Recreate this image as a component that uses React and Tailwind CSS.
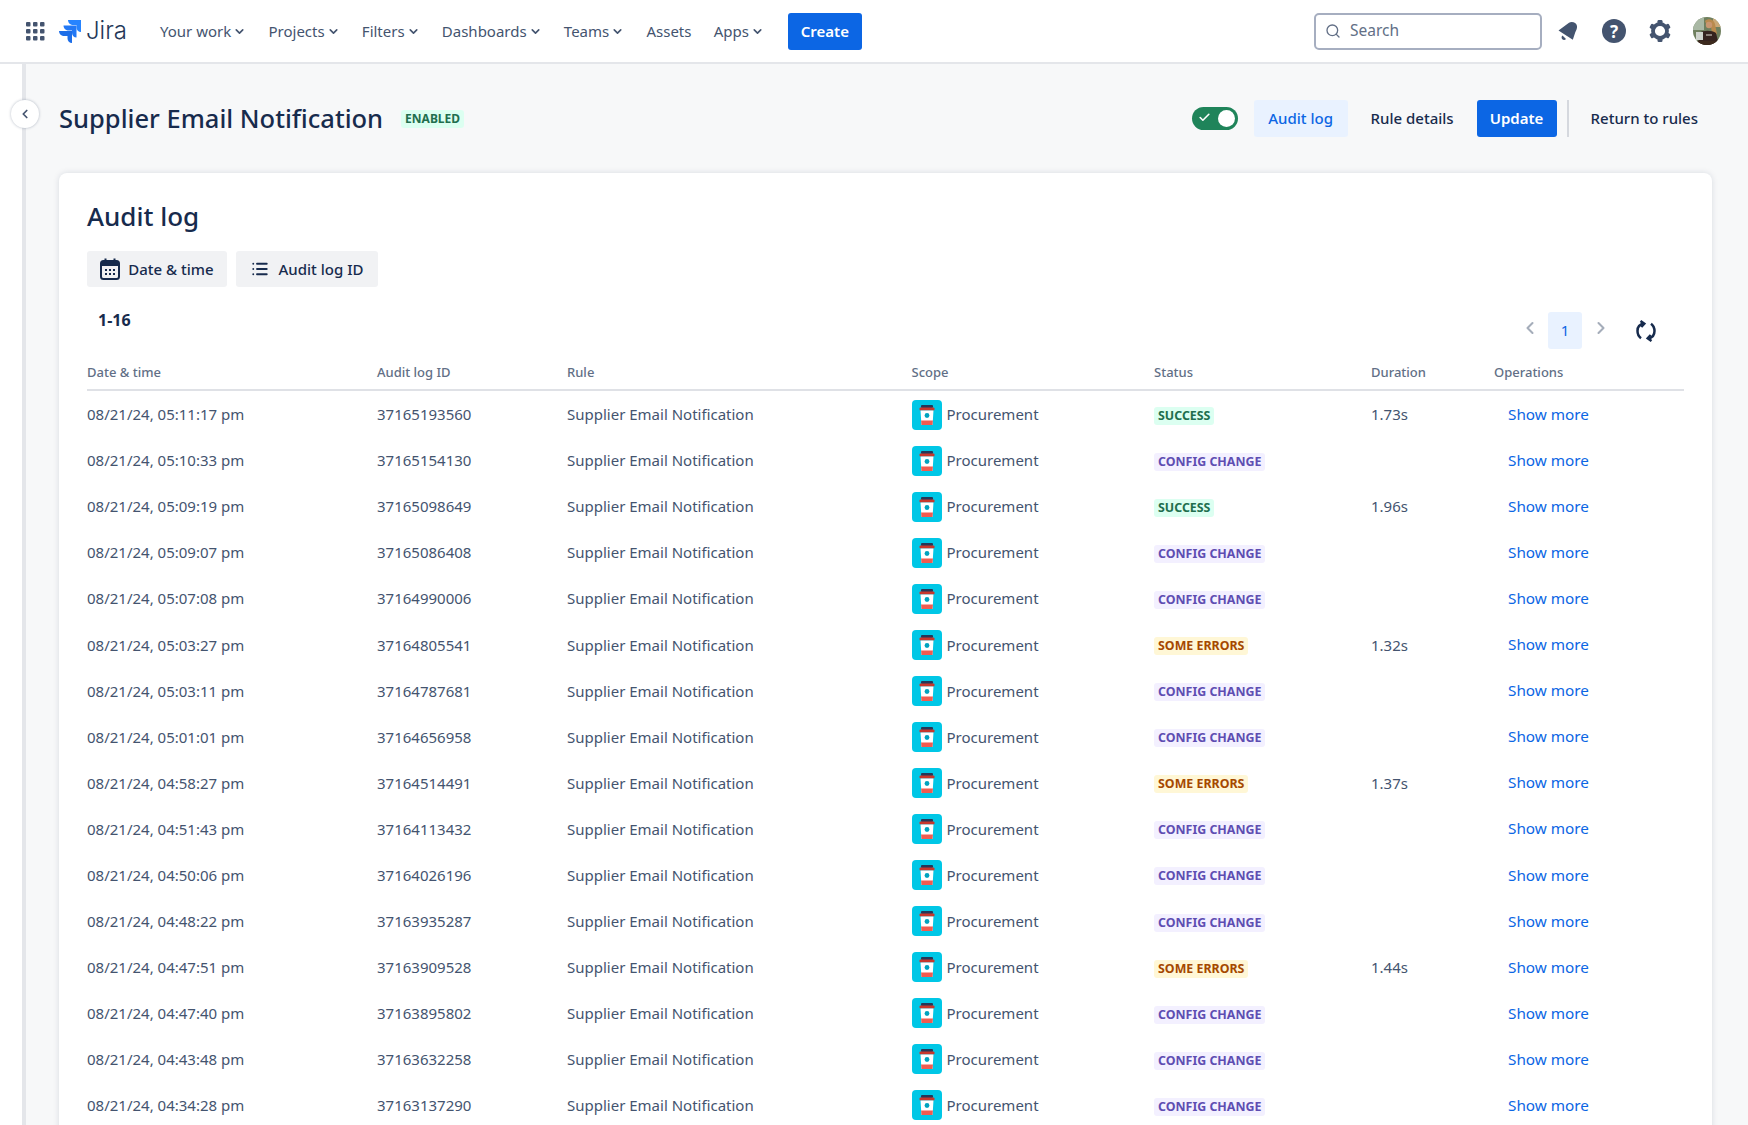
import React from 'react';
import { ChevronDown, ChevronLeft, ChevronRight, Search, List, Check } from 'lucide-react';

const rows = [
  ['08/21/24, 05:11:17 pm', '37165193560', 'success', '1.73s'],
  ['08/21/24, 05:10:33 pm', '37165154130', 'config', ''],
  ['08/21/24, 05:09:19 pm', '37165098649', 'success', '1.96s'],
  ['08/21/24, 05:09:07 pm', '37165086408', 'config', ''],
  ['08/21/24, 05:07:08 pm', '37164990006', 'config', ''],
  ['08/21/24, 05:03:27 pm', '37164805541', 'errors', '1.32s'],
  ['08/21/24, 05:03:11 pm', '37164787681', 'config', ''],
  ['08/21/24, 05:01:01 pm', '37164656958', 'config', ''],
  ['08/21/24, 04:58:27 pm', '37164514491', 'errors', '1.37s'],
  ['08/21/24, 04:51:43 pm', '37164113432', 'config', ''],
  ['08/21/24, 04:50:06 pm', '37164026196', 'config', ''],
  ['08/21/24, 04:48:22 pm', '37163935287', 'config', ''],
  ['08/21/24, 04:47:51 pm', '37163909528', 'errors', '1.44s'],
  ['08/21/24, 04:47:40 pm', '37163895802', 'config', ''],
  ['08/21/24, 04:43:48 pm', '37163632258', 'config', ''],
  ['08/21/24, 04:34:28 pm', '37163137290', 'config', ''],
];

const navItems = [
  ['Your work', true],
  ['Projects', true],
  ['Filters', true],
  ['Dashboards', true],
  ['Teams', true],
  ['Assets', false],
  ['Apps', true],
];

const gridCols = 'grid grid-cols-[290px_190px_344.5px_242.5px_217px_123px_1fr] items-center';

const StatusBadge = ({ status }) => {
  if (status === 'success') {
    return <span className="rounded-[3px] bg-[#dcfff1] px-[4px] h-[18px] leading-[18px] text-[12.400px] font-bold text-[#216e4e]">SUCCESS</span>;
  }
  if (status === 'errors') {
    return <span className="rounded-[3px] bg-[#fff7d6] px-[4px] h-[18px] leading-[18px] text-[12.400px] font-bold text-[#a54800]">SOME ERRORS</span>;
  }
  return <span className="rounded-[3px] bg-[#f3f0ff] px-[4px] h-[18px] leading-[18px] text-[12.400px] font-bold text-[#5e4db2]">CONFIG CHANGE</span>;
};

const CupIcon = () => (
  <svg width="30" height="30" viewBox="0 0 30 30" className="shrink-0">
    <rect width="30" height="30" rx="4" fill="#00c7e6" />
    <rect x="9" y="5" width="12" height="3" rx="1" fill="#253858" />
    <rect x="7.500" y="7.500" width="15" height="3" rx="1" fill="#c9372c" />
    <path d="M8.500 10.500h13l-1 14.500h-11z" fill="#fff" />
    <path d="M9.100 20.500h11.800l-.4 4.500h-11z" fill="#f15b50" />
    <circle cx="15" cy="15.500" r="2.400" fill="#00a3bf" />
  </svg>
);

const JiraMark = ({ x, y, fill }) => (
  <path transform={`translate(${x} ${y})`} fill={fill} d="M0 0H13V12C10.500 12 8.500 10 8.500 7.500V5H5.500C2.500 5 0 3 0 0Z" />
);

const JiraLogo = () => (
  <svg width="22" height="23" viewBox="0 0 22 23">
    <JiraMark x={9} y={0} fill="#2684ff" />
    <JiraMark x={4.500} y={5.500} fill="#2278f5" />
    <JiraMark x={0} y={11} fill="#1d6ee8" />
  </svg>
);

const GridIcon = () => (
  <svg width="20" height="20" viewBox="0 0 20 20" fill="#44546f">
    {[1, 8, 15].flatMap((y) =>
      [1, 8, 15].map((x) => <rect key={`${x}-${y}`} x={x} y={y} width="4.500" height="4.500" rx="1" />)
    )}
  </svg>
);

const BellIcon = () => (
  <svg width="24" height="24" viewBox="0 0 24 24" fill="#44546f">
    <path d="M2.500 11.500 13 3.800c2.500-1.800 7.500-.5 8 3.200.4 2.800-1 4.200-1.800 6.500l-2.400 7.200z" />
    <path d="M6.500 16.500l3.500 3.500c-1 1.200-2.600 1.300-3.700.2s-.9-2.700.2-3.700z" />
  </svg>
);

const GearIcon = () => (
  <svg width="24" height="24" viewBox="0 0 24 24">
    <circle cx="12" cy="12" r="7" fill="none" stroke="#44546f" strokeWidth="3.800" />
    {[0, 60, 120, 180, 240, 300].map((a) => (
      <rect key={a} x="9.500" y="1" width="5" height="4.500" rx="1.200" fill="#44546f" transform={`rotate(${a} 12 12)`} />
    ))}
  </svg>
);

const Avatar = () => (
  <svg width="28" height="28" viewBox="0 0 28 28" className="rounded-full">
    <rect width="28" height="28" fill="#6f7f5e" />
    <rect x="0" y="0" width="11" height="13" fill="#a9b8a4" />
    <rect x="20" y="0" width="8" height="10" fill="#c9a877" />
    <path d="M12 4c3-3 9-2 10 3l2 10h-5l-1-8h-4z" fill="#b98a4e" />
    <circle cx="16" cy="8" r="3.200" fill="#c99670" />
    <path d="M5 28l1-12c4-3 13-3 17 0l3 12z" fill="#35231f" />
    <rect x="3" y="15" width="7" height="8" fill="#cfd3cc" />
    <rect x="13" y="17" width="6" height="2" fill="#8a7f78" />
    <rect x="0" y="24" width="28" height="4" fill="#3d2a1e" />
  </svg>
);

const CalendarIcon = () => (
  <svg width="20" height="22" viewBox="0 0 20 22">
    <rect x="1" y="3" width="18" height="18" rx="2.500" fill="none" stroke="#172b4d" strokeWidth="2" />
    <rect x="1" y="3" width="18" height="5" fill="#172b4d" />
    <rect x="4.500" y="0.500" width="2" height="4" fill="#172b4d" />
    <rect x="13.500" y="0.500" width="2" height="4" fill="#172b4d" />
    {[11, 15].flatMap((y) =>
      [5, 9, 13].map((x) => <rect key={`${x}-${y}`} x={x} y={y} width="2" height="2" fill="#172b4d" />)
    )}
  </svg>
);

const RefreshIcon = () => (
  <svg width="20" height="22" viewBox="0 0 20 22" fill="none" stroke="#172b4d" strokeWidth="2.500">
    <path d="M8 3.500C3.800 4 1.500 7 1.500 11c0 3 1.300 5.600 3.500 7.300" />
    <path d="M4.500 1l3.800 2.700L5.300 7" />
    <path d="M12 18.500c4.200-.5 6.500-3.500 6.500-7.500 0-3-1.300-5.600-3.500-7.300" />
    <path d="M15.500 21l-3.800-2.700 3-3.300" />
  </svg>
);

const App = () => {
  return (
    <div className="h-screen overflow-hidden bg-[#f7f8f9] font-['Noto_Sans',sans-serif] text-[#44546f] relative">
      <header className="h-[64px] bg-white border-b-2 border-[#e4e6ea] flex items-center">
        <div className="ml-[25px] flex items-center"><GridIcon /></div>
        <div className="ml-[14px] flex items-center gap-[6px]">
          <JiraLogo />
          <span className="text-[24px] leading-none text-[#253858] font-['Inter',sans-serif] font-light -ml-[1px]">Jira</span>
        </div>
        <nav className="ml-[33px] flex items-center gap-[22.200px]">
          {navItems.map(([label, hasMenu]) => (
            <span key={label} className="flex items-center gap-[2px] text-[15px] text-[#44546f]">
              {label}
              {hasMenu && <ChevronDown size={13} strokeWidth={3} />}
            </span>
          ))}
        </nav>
        <button className="ml-[24px] h-[37px] w-[74px] rounded-[3px] bg-[#0c66e4] text-white text-[15px] font-semibold">Create</button>
        <div className="ml-auto flex items-center mr-[27px]">
          <div className="h-[37px] w-[228px] rounded-[5px] border-2 border-[#a6aec0] flex items-center pl-[9px] gap-[9px] text-[15.500px] text-[#626f86]">
            <Search size={16} />
            Search
          </div>
          <div className="ml-[14px] w-[24px] flex justify-center"><BellIcon /></div>
          <div className="ml-[22px] w-[24px] h-[24px] rounded-full bg-[#44546f] flex items-center justify-center text-white text-[17px] font-bold leading-none">?</div>
          <div className="ml-[22px]"><GearIcon /></div>
          <div className="ml-[21px]"><Avatar /></div>
        </div>
      </header>

      <div className="flex h-[calc(100vh-64px)]">
        <div className="w-[22px] bg-white shrink-0" />
        <main className="flex-1 min-w-0 border-l-4 border-[#e4e6ea] pl-[33px] pr-[36px]">
          <div className="h-[109px] flex items-center">
            <h1 className="text-[25.500px] leading-none text-[#172b4d] font-medium">Supplier Email Notification</h1>
            <span className="ml-[18px] h-[18px] rounded-[3px] bg-[#dcfff1] px-[4px] text-[12px] leading-[18px] font-bold text-[#216e4e]">ENABLED</span>
            <div className="ml-auto flex items-center pr-[14px]">
              <div className="relative w-[46px] h-[23px] rounded-full bg-[#1f845a] mr-[16px]">
                <Check size={13} strokeWidth={3} className="absolute left-[6px] top-[4px] text-white" />
                <span className="absolute right-[3px] top-[3px] w-[17px] h-[17px] rounded-full bg-white" />
              </div>
              <button className="h-[37px] w-[94px] rounded-[3px] bg-[#e9f2ff] text-[#0c66e4] text-[15px] font-medium">Audit log</button>
              <button className="h-[37px] w-[129px] text-[#172b4d] text-[15px] font-medium">Rule details</button>
              <button className="h-[37px] w-[80px] rounded-[3px] bg-[#0c66e4] text-white text-[15px] font-semibold">Update</button>
              <div className="ml-[10px] w-[2px] h-[37px] bg-[#d5d8de]" />
              <button className="ml-[22px] text-[#172b4d] text-[15px] font-medium">Return to rules</button>
            </div>
          </div>

          <section className="rounded-t-lg bg-white shadow-[0_0_6px_rgba(9,30,66,0.13)] px-[28px] pt-[24px] h-[1000px]">
            <h2 className="text-[26px] leading-[38px] text-[#172b4d] font-medium">Audit log</h2>
            <div className="mt-[16px] flex gap-[9px]">
              <button className="h-[36px] w-[140px] rounded-[3px] bg-[#f1f2f4] flex items-center justify-center gap-[8px] text-[15px] font-medium text-[#172b4d]">
                <CalendarIcon />
                Date &amp; time
              </button>
              <button className="h-[36px] w-[142px] rounded-[3px] bg-[#f1f2f4] flex items-center justify-center gap-[10px] text-[15px] font-medium text-[#172b4d]">
                <List size={18} strokeWidth={2.5} />
                Audit log ID
              </button>
            </div>

            <div className="h-[66px] flex items-start justify-between pr-[28px]">
              <span className="ml-[11px] mt-[23px] text-[16px] leading-[20px] font-bold text-[#172b4d]">1-16</span>
              <div className="flex items-center mt-[25px]">
                <ChevronLeft size={20} className="text-[#a5adba] -mt-[6px]" strokeWidth={2.5} />
                <span className="ml-[8px] mr-[9px] w-[34px] h-[37px] rounded-[3px] bg-[#e9f2ff] text-[#0c66e4] text-[15px] flex items-center justify-center">1</span>
                <ChevronRight size={20} className="text-[#a5adba] -mt-[6px]" strokeWidth={2.5} />
                <div className="ml-[25px]"><RefreshIcon /></div>
              </div>
            </div>

            <div className={`${gridCols} h-[38px] pt-[4px] border-b-2 border-[#dfe1e6] text-[13px] font-medium text-[#626f86]`}>
              <div>Date &amp; time</div>
              <div>Audit log ID</div>
              <div>Rule</div>
              <div>Scope</div>
              <div>Status</div>
              <div>Duration</div>
              <div>Operations</div>
            </div>

            {rows.map(([date, id, status, duration]) => (
              <div key={id} className={`${gridCols} h-[46.050px] pt-[1px] text-[15px]`}>
                <div>{date}</div>
                <div>{id}</div>
                <div>Supplier Email Notification</div>
                <div className="flex items-center gap-[5px]">
                  <CupIcon />
                  Procurement
                </div>
                <div className="flex pt-[3px]"><StatusBadge status={status} /></div>
                <div>{duration}</div>
                <div className="pl-[14px] text-[15.300px] text-[#0c66e4]">Show more</div>
              </div>
            ))}
          </section>
        </main>
      </div>

      <button className="absolute left-[11px] top-[100px] w-[28px] h-[28px] rounded-full bg-white shadow-[0_0_3px_rgba(9,30,66,0.3)] flex items-center justify-center text-[#44546f]">
        <ChevronLeft size={14} strokeWidth={3} />
      </button>
    </div>
  );
};

export default App;
